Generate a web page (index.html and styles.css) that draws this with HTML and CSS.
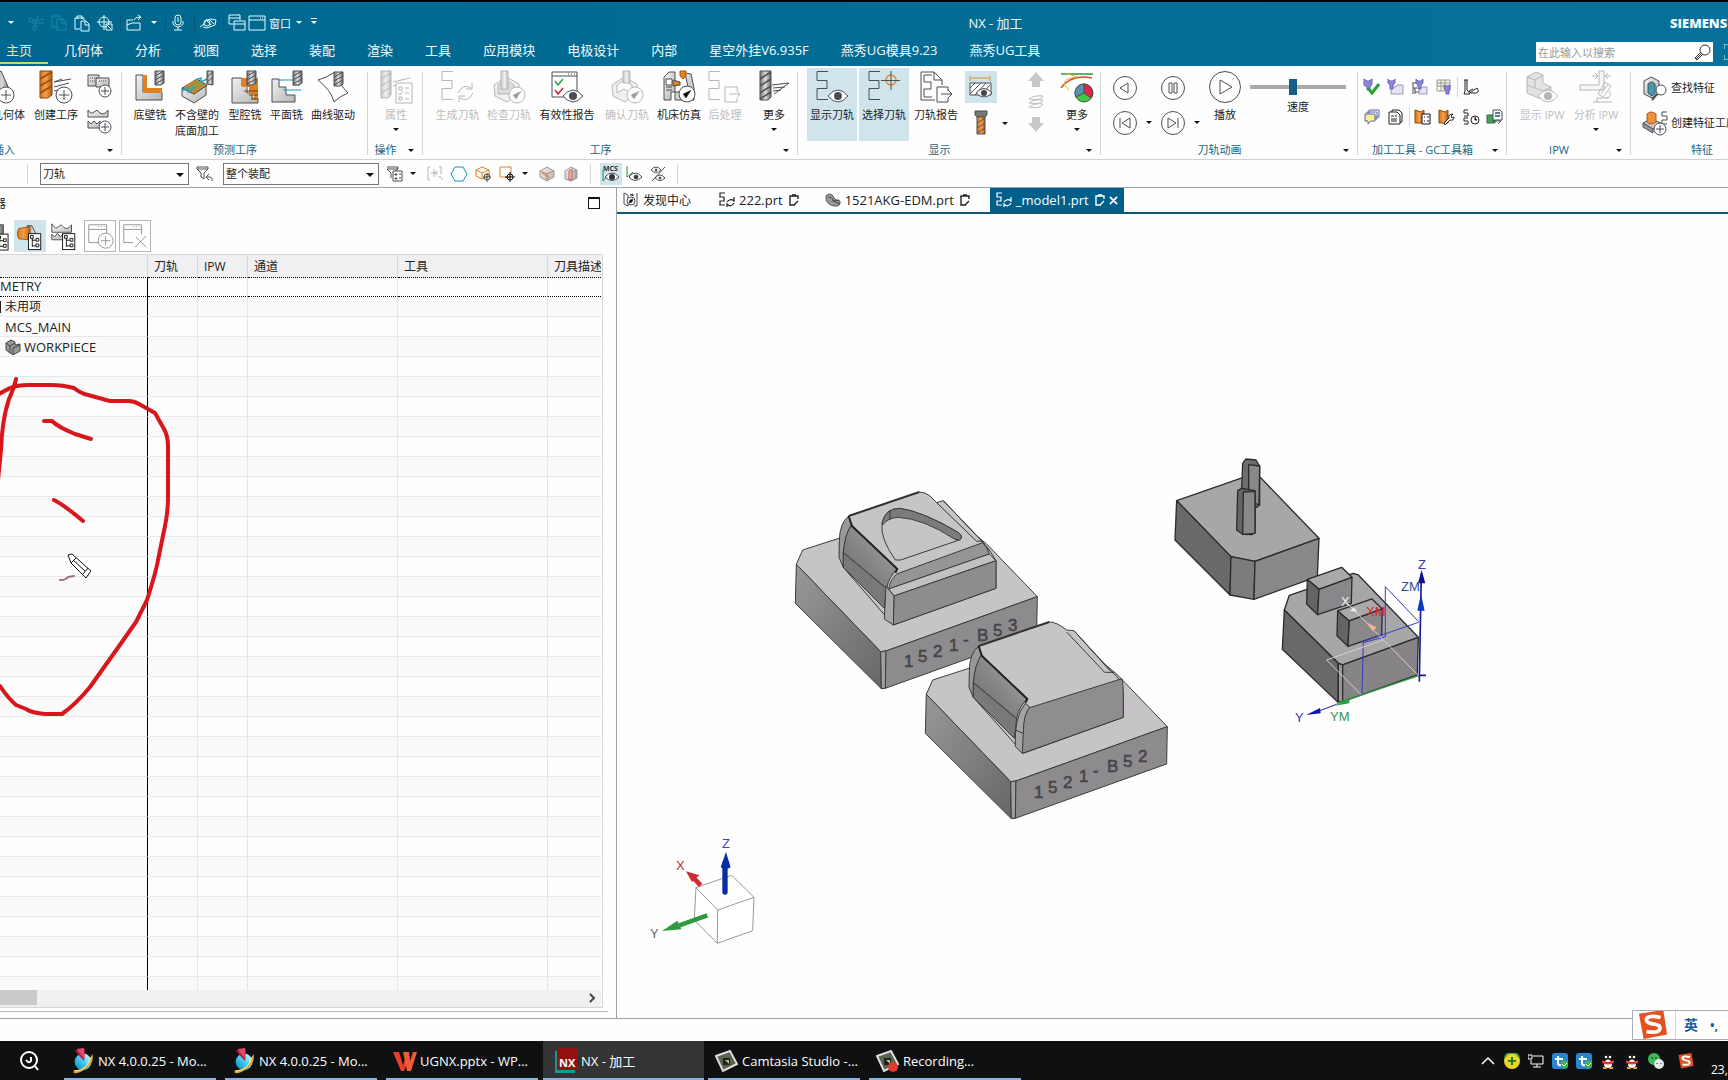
FILE: index.html
```html
<!DOCTYPE html>
<html lang="zh-CN">
<head>
  <meta charset="UTF-8" />
  <meta name="viewport" content="width=device-width, initial-scale=1.0"/>
  <title>NX - 加工</title>
  <link rel="stylesheet" href="styles.css">
</head>
<body>

  <!-- shared icon parts -->
  <svg class="defs" aria-hidden="true">
    <defs>
      <linearGradient id="steel" x1="0" x2="1"><stop offset="0" stop-color="#777"/><stop offset=".5" stop-color="#ddd"/><stop offset="1" stop-color="#666"/></linearGradient>
      <linearGradient id="metal" x1="0" x2="1" y2="1"><stop offset="0" stop-color="#f2f2f2"/><stop offset="1" stop-color="#b5b5b5"/></linearGradient>
      <linearGradient id="copper" x1="0" x2="1"><stop offset="0" stop-color="#d9731a"/><stop offset=".5" stop-color="#f6a04a"/><stop offset="1" stop-color="#b65a12"/></linearGradient>
      <linearGradient id="side" x1="0" x2="1" y2="1"><stop offset="0" stop-color="#9b989c"/><stop offset="1" stop-color="#69666a"/></linearGradient>
      <linearGradient id="bend" x1="0" x2="1" y1="1" y2="0"><stop offset="0" stop-color="#6b686c"/><stop offset=".55" stop-color="#8d8a8e"/><stop offset="1" stop-color="#b4b2b5"/></linearGradient>
      <linearGradient id="globe" x1="0" x2="1" y1="1"><stop offset="0" stop-color="#0b78c9"/><stop offset=".5" stop-color="#3fd0f0"/><stop offset="1" stop-color="#eafcff"/></linearGradient>
      <g id="eye"><path d="M-10 0Q0-12 10 0Q0 12-10 0z" fill="#fff"/><circle r="4" fill="#4a4f55" stroke="none"/></g>
      <g id="plus"><circle r="8" fill="#fff"/><path d="M-5 0H5M0-5V5"/></g>
      <g id="tick"><circle r="8" fill="#fff"/><path d="M-4 0l3 4 5-8"/></g>
      <g id="snake"><path d="M11 0H0v9h10v8H0v11h11" fill="none"/></g>
      <g id="mill"><path d="M0 0h9v12l-3 2H0z" fill="url(#steel)"/><path d="M0 5l9-5M0 9l9-5M0 13l9-5"/></g>
      <g id="tree"><rect width="13" height="17" fill="#fff" stroke="#111"/><path d="M4 3v11M4 7h4M4 13h4" stroke="#111"/><path d="M8 5h3v3H8zM8 11h3v3H8zM2 2h3v3H2z" fill="#fff" stroke="#111"/></g>
      <symbol id="clip" viewBox="0 0 10 12"><path d="M9 5V2H1v9h5M3 1h4M5 11l4-4" fill="none" stroke="currentColor" stroke-width="1.4"/></symbol>
      <symbol id="path-tab" viewBox="0 0 16 16"><g fill="none" stroke="currentColor" stroke-width="1.2"><path d="M6 1H1v4h4v4H1v4h5"/><path d="M8 10q3-4 7-1V5M15 11q-3 5-7 1v3"/></g></symbol>
      <symbol id="nxlogo" viewBox="0 0 24 28"><circle cx="12" cy="15" r="9" fill="url(#globe)"/><path d="M3 3l10 11 1-13z" fill="#b3173a"/><path d="M5 1l8-1 1 13z" fill="#df4a67"/><path d="M2 24Q18 24 22 6Q25 16 14 23Q7 28 2 27z" fill="#e0a52a"/><path d="M3 25Q17 24 21 9" fill="none" stroke="#fff0a0"/></symbol>
      <symbol id="cam" viewBox="0 0 24 22"><path d="M1 6L15 1l7 13L8 21z" fill="#5b6350" stroke="#ddd" stroke-width="2"/><path d="M8 8h7v7H8z" fill="#20251c"/><path d="M10 10h4v4z" fill="#a8cc6c"/></symbol>
      <symbol id="tbox" viewBox="0 0 16 16"><rect width="16" height="16" rx="3" fill="#2a86d2"/><path d="M6 3v7q0 3 4 2M3 6h8" fill="none" stroke="#fff" stroke-width="2"/><path d="M9 8h7v5l-3 3-4-3z" fill="#43b549"/><path d="M10 11l2 2 3-3" fill="none" stroke="#fff"/></symbol>
      <symbol id="qq" viewBox="0 0 16 16"><ellipse cx="8" cy="8" rx="5" ry="7" fill="#111"/><ellipse cx="8" cy="11" rx="4" ry="4" fill="#fff"/><path d="M2 7q6 4 12 0v3q-6 3-12 0z" fill="#e0343c"/><circle cx="6" cy="4" r="1.3" fill="#fff"/><circle cx="10" cy="4" r="1.3" fill="#fff"/><path d="M6 6h4l-2 1zM3 14h4v2H3zM9 14h4v2H9z" fill="#f3a21c"/></symbol>
      <symbol id="sogou" viewBox="0 0 32 32"><path d="M1 4L27 0l4 26L6 31z" fill="#e8501f"/><path d="M24 8Q10 5 9 10q0 4 8 5 8 1 6 6-2 4-14 2" fill="none" stroke="#fff" stroke-width="4"/></symbol>
    </defs>
  </svg>

  <header class="app-header">
    <div class="titlebar">
      <div class="quick">
        <span class="caret light first"></span>
        <button class="qbtn dim" aria-label="剪切"><svg viewBox="0 0 16 16"><circle cx="3" cy="5" r="2"/><circle cx="7" cy="13" r="2"/><path d="M5 6l11-2M7 11l3-10M4 8h12"/></svg></button>
        <button class="qbtn dim" aria-label="复制"><svg viewBox="0 0 16 16"><path d="M6 12H1V1h8v3M6 4h6l3 3v8H6zM11 4v4h4"/></svg></button>
        <button class="qbtn" aria-label="粘贴"><svg viewBox="0 0 16 16"><path d="M6 14H1V3h9v2M3 4V1h5v3M7 6h5l3 3v7H7zM11 6v4h4"/></svg></button>
        <button class="qbtn" aria-label="定位"><svg viewBox="0 0 16 16"><circle cx="7" cy="7" r="5"/><path d="M7 0v15M0 7h15M9 9h6v6H9zM11 11l3 3"/></svg></button>
        <span class="qsep"></span>
        <button class="qbtn" aria-label="打开"><svg viewBox="0 0 16 16"><path d="M7 5H1v10h13V8H6L1 10M8 5q1-3 6-3M12 0l3 2-3 3"/></svg></button>
        <span class="caret light mid"></span>
        <span class="qsep"></span>
        <button class="qbtn" aria-label="语音"><svg viewBox="0 0 16 16"><rect x="4" y="0" width="6" height="10" rx="3"/><path d="M2 6v3q5 6 10 0V6M7 12v3M3 15h8M7 2v5"/></svg></button>
        <span class="qsep"></span>
        <button class="qbtn" aria-label="触摸"><svg viewBox="0 0 16 16"><path d="M0 12l4-3 2-4 5-1 5 1-1 5-3 1-5 2-4-1M6 5l5 5M9 4l5 5"/><circle cx="7" cy="8" r="3"/></svg></button>
        <span class="qsep"></span>
        <button class="qbtn" aria-label="切换窗口"><svg viewBox="0 0 16 16"><path d="M4 9H0V0h11v5M0 3h11M5 6h11v9H5zM5 9h11"/></svg></button>
        <button class="qbtn label"><svg viewBox="0 0 16 16"><path d="M0 1h16v14H0zM0 5h16M11 3h1M13 3h1"/></svg>窗口</button>
        <span class="caret light mid"></span>
        <span class="caret light bar"></span>
      </div>
      <h1 class="title">NX - 加工</h1>
      <span class="brand">SIEMENS</span>
    </div>
    <div class="menubar">
      <nav class="menu">
        <a href="#" class="on">主页</a>
        <a href="#">几何体</a>
        <a href="#">分析</a>
        <a href="#">视图</a>
        <a href="#">选择</a>
        <a href="#">装配</a>
        <a href="#">渲染</a>
        <a href="#">工具</a>
        <a href="#">应用模块</a>
        <a href="#">电极设计</a>
        <a href="#">内部</a>
        <a href="#">星空外挂V6.935F</a>
        <a href="#">燕秀UG模具9.23</a>
        <a href="#">燕秀UG工具</a>
      </nav>
      <div class="search">
        <input type="text" placeholder="在此输入以搜索" aria-label="搜索">
        <svg viewBox="0 0 16 16"><circle cx="10" cy="6" r="5" fill="none" stroke="#333"/><path d="M7 9l-6 6M6 8l-6 6 2 2 6-6" fill="none" stroke="#333"/></svg>
      </div>
      <svg class="full" viewBox="0 0 16 16"><path d="M0 5V0h5M11 0h5v5M16 11v5h-5M5 16H0v-5" fill="none" stroke="#dff"/></svg>
    </div>
  </header>

  <section class="ribbon">
    <div class="group g-insert">
      <div class="tools">
        <button class="big w55"><svg viewBox="0 0 32 32" class="ic"><path d="M12 4l7-4 9 20-8 4z" fill="url(#steel)"/><use href="#plus" x="24" y="24"/></svg><span>创建几何体</span></button>
        <button class="big w56"><svg viewBox="0 0 32 32" class="ic"><path d="M0 0h12v24l-4 3H0z" fill="url(#copper)" stroke="#7a4a1a"/><path d="M0 8l12-7M0 15l12-7M0 22l12-7" stroke="#9a5210" stroke-width="2"/><path d="M14 11l17-3M14 16l15-4M14 20l10-3M14 11l8-3" fill="none"/><use href="#plus" x="24" y="24"/></svg><span>创建工序</span></button>
        <div class="stack">
          <button class="small24" aria-label="创建刀具"><svg viewBox="0 0 24 24" class="ic"><path d="M1 4h11v11H1z" fill="url(#metal)"/><path d="M9 7h13v9H9z" fill="url(#metal)"/><path d="M3 7h7M3 10h5M12 10h7" stroke-dasharray="1 1"/><circle cx="18" cy="20" r="6" fill="#fff"/><path d="M14 20h8M18 16v8"/></svg></button>
          <button class="small24" aria-label="创建方法"><svg viewBox="0 0 24 24" class="ic"><path d="M1 1q3 5 6 2l3-2 3 3q4 3 8-3v7H1zM1 12l3 3 3-3 3 3 3-3v7H1z" fill="url(#metal)"/><circle cx="18" cy="18" r="6" fill="#fff"/><path d="M14 18h8M18 14v8"/></svg></button>
        </div>
      </div>
      <div class="cap"><span>插入</span><i class="caret"></i></div>
    </div>

    <div class="group g-predict">
      <div class="tools">
        <button class="big w44"><svg viewBox="0 0 32 32" class="ic"><path d="M2 4h7v17h19v8H2z" fill="url(#metal)"/><path d="M9 4h4v13h15v5H9z" fill="#e0821e" stroke="none"/><use href="#mill" x="21" y="0"/></svg><span>底壁铣</span></button>
        <button class="big w50"><svg viewBox="0 0 32 32" class="ic"><path d="M1 17l12 6 12-8v9l-12 8-12-7z" fill="url(#metal)"/><path d="M1 17l15-9 10 6-13 9z" fill="#8a9a4a"/><path d="M4 16l14-8M8 19l14-8M11 22l13-8" stroke="#d78520" stroke-width="2"/><path d="M1 20l6-3v4l8-6M14 9l6-2v4l6-3" fill="none" stroke="#22a8cc" stroke-width="1.5"/><path d="M26 0h6v14l-6-1z" fill="url(#steel)"/><path d="M26 6l6-5M26 11l6-5"/></svg><span>不含壁的<br>底面加工</span></button>
        <button class="big w46"><svg viewBox="0 0 32 32" class="ic"><path d="M3 7h10v8h5v7h5v5h6v5H3z" fill="url(#metal)"/><path d="M13 7h16v22h-4v-6h-5v-7h-7z" fill="#dd8123" stroke="none"/><path d="M15 20h14M20 24h9M22 28h7" stroke="#70410f"/><use href="#mill" x="18" y="0"/></svg><span>型腔铣</span></button>
        <button class="big w37"><svg viewBox="0 0 32 32" class="ic"><path d="M1 8h7v8h7v8h9v7H1z" fill="url(#metal)"/><path d="M8 9h17M12 19h18M22 14h7" stroke="#1696b4"/><use href="#mill" x="22" y="0"/></svg><span>平面铣</span></button>
        <button class="big w56"><svg viewBox="0 0 32 32" class="ic"><path d="M1 9q8-2 17-8 4 12 13 21-8 3-14 9Q14 19 1 9z" fill="#fff"/><use href="#mill" x="17" y="1"/></svg><span>曲线驱动</span></button>
      </div>
      <div class="cap"><span>预测工序</span></div>
    </div>

    <div class="group g-op">
      <div class="tools">
        <button class="big w56" disabled><svg viewBox="0 0 32 32" class="ic"><path d="M1 0h10v24l-3 3H1z" fill="url(#steel)"/><path d="M1 8l10-6M1 15l10-6M1 22l10-6M13 11l17-4M13 15l10-3"/><path d="M16 12h16v20H16z" fill="#fff"/><path d="M19 16h3v3h-3zM19 26h3v3h-3zM25 17h4M25 22h4M25 28h4M18 22l2 2 3-4" fill="none"/></svg><span>属性</span><i class="caret"></i></button>
      </div>
      <div class="cap"><span>操作</span><i class="caret"></i></div>
    </div>

    <div class="group g-path">
      <div class="tools">
        <button class="big w53" disabled><svg viewBox="0 0 32 32" class="ic"><use href="#snake" x="0" y="0.5"/><path d="M16 22q5-10 13-5M30 12v6h-6M31 22q-5 10-13 5M17 31v-6h6" fill="none"/></svg><span>生成刀轨</span></button>
        <button class="big w50" disabled><svg viewBox="0 0 32 32" class="ic"><path d="M1 14l12-8 13 7v9l-12 9-12-6z" fill="#ddd"/><path d="M5 14l8-5 8 5v9H5z" fill="#aaa"/><path d="M8 0h7v18H8z" fill="url(#steel)"/><use href="#tick" x="24" y="24"/></svg><span>检查刀轨</span></button>
        <button class="big w66"><svg viewBox="0 0 32 32" class="ic"><path d="M1 1h25v25H1z" fill="#fff"/><path d="M1 5h25M17 3h1M20 3h1M23 3h1"/><path d="M4 10l3 4 5-6" fill="none" stroke="#23a646" stroke-width="1.5"/><path d="M4 19l3 4 5-6" fill="none" stroke="#d3222a" stroke-width="1.5"/><use href="#eye" x="22" y="25"/></svg><span>有效性报告</span></button>
        <button class="big w54" disabled><svg viewBox="0 0 32 32" class="ic"><path d="M1 14l12-8 13 7v9l-12 9-12-6z" fill="#ddd"/><path d="M6 14l7-5 8 5v9l-8-5-7 4z" fill="#fff"/><path d="M12 0h7v12h-7z" fill="url(#steel)"/><use href="#tick" x="24" y="24"/></svg><span>确认刀轨</span></button>
        <button class="big w50"><svg viewBox="0 0 32 32" class="ic"><path d="M1 6l5-5h6v20H8v8H1z" fill="url(#metal)"/><path d="M22 2l6 1 3 14v12H12v-8h14z" fill="url(#metal)"/><path d="M3 8h6v6H3zM3 16h6M3 19h6" fill="#fff"/><path d="M10 9l7 2v3l-7 1z" fill="#e0821e"/><path d="M17 0h6v5l-3 3-3-3z" fill="#e0821e" stroke="#a55a10"/><use href="#tick" x="24" y="23"/></svg><span>机床仿真</span></button>
        <button class="big w42" disabled><svg viewBox="0 0 32 32" class="ic"><use href="#snake" x="0" y="0.5"/><path d="M28 20v-4H16v15h12v-4M20 23h11M28 20l3 3-3 3" fill="none"/></svg><span>后处理</span></button>
        <button class="big w44 gap6"><svg viewBox="0 0 32 32" class="ic"><path d="M2 0h11v26l-3 3H2z" fill="url(#steel)"/><path d="M2 8l11-7M2 15l11-7M2 22l11-7M2 28l11-7" stroke-width="1.5"/><path d="M14 14l17-2-15 11M15 17l12-1M15 20l8-1" fill="none"/></svg><span>更多</span><i class="caret"></i></button>
      </div>
      <div class="cap"><span>工序</span><i class="caret"></i></div>
    </div>

    <div class="group g-show">
      <div class="tools">
        <button class="big w50 active"><svg viewBox="0 0 32 32" class="ic"><use href="#snake" x="1" y="0.5"/><use href="#eye" x="22" y="25"/></svg><span>显示刀轨</span></button>
        <button class="big w50 active"><svg viewBox="0 0 32 32" class="ic"><use href="#snake" x="1" y="0.5"/><circle cx="23" cy="9" r="5" fill="none" stroke="#e08a36" stroke-width="1.5"/><path d="M13 9.5h19M23 0v19"/></svg><span>选择刀轨</span></button>
        <button class="big w50"><svg viewBox="0 0 32 32" class="ic"><path d="M15 29H1V1h13l8 8v5M14 1v8h8" fill="none"/><path d="M12 4H4v7h7v7H4v8h8M28 20v-4H17v15h11v-4M21 23h11M28 19l4 4-4 4" fill="none"/></svg><span>刀轨报告</span></button>
        <div class="stack two">
          <button class="pad active" aria-label="显示毛坯"><svg viewBox="0 0 24 24" class="ic"><path d="M1 8h21v12H1z" fill="#fff"/><path d="M1 13l5-5M1 19L12 8M6 20L17 8M12 20l9-10"/><path d="M1 3h20M1 1v5M21 1v5" stroke="#e08a36"/><path d="M7 18q8-9 16 0-8 8-16 0z" fill="#fff"/><circle cx="15" cy="18" r="3" fill="#444" stroke="none"/></svg></button>
          <button class="pad" aria-label="显示刀具"><svg viewBox="0 0 24 24" class="ic"><path d="M2 0h12v4l-2 2H4L2 4z" fill="#777"/><path d="M4 6h8v17H4z" fill="url(#copper)"/><path d="M4 12l8-5M4 17l8-5M4 22l8-5"/></svg></button>
          <i class="caret"></i>
        </div>
        <div class="levels">
          <svg viewBox="0 0 18 62"><g fill="#c9c9c9"><path d="M9 1l8 9h-4v6H5v-6H1zM9 61l8-9h-4v-6H5v6H1z"/></g><g fill="#fff" stroke="#bbb"><path d="M2 36q5-4 14-3-2 5-14 3zM2 32q5-4 14-3-2 5-14 3zM2 28q5-4 14-3-2 5-14 3z"/></g></svg>
        </div>
        <button class="big w44"><svg viewBox="0 0 32 32" class="ic"><path d="M0 3h32" stroke="#2a9a3c" stroke-width="1.5"/><path d="M0 17Q10 3 31 7" fill="none" stroke="#d4502c" stroke-width="1.5"/><path d="M4 2l12 4Q-4 8 8 19" fill="none" stroke="#e8b42a"/><circle cx="23" cy="22" r="9" fill="#3dcb43"/><path d="M23 22V13a9 9 0 0 1 7 14z" fill="#e62345"/><path d="M23 22V13a9 9 0 0 0-8 13z" fill="#5794ac"/></svg><span>更多</span><i class="caret"></i></button>
      </div>
      <div class="cap"><span>显示</span><i class="caret"></i></div>
    </div>

    <div class="group g-anim">
      <div class="tools">
        <div class="playgrid">
          <button aria-label="反向播放"><svg viewBox="0 0 24 24" class="ic"><circle cx="12" cy="12" r="11.5" fill="#fff"/><path d="M15 7v10l-8-5z" fill="none"/></svg></button><span></span>
          <button aria-label="暂停"><svg viewBox="0 0 24 24" class="ic"><circle cx="12" cy="12" r="11.5" fill="#fff"/><path d="M8 7h3v10H8zM13 7h3v10h-3z" fill="none"/></svg></button><span></span>
          <button aria-label="上一步"><svg viewBox="0 0 24 24" class="ic"><circle cx="12" cy="12" r="11.5" fill="#fff"/><path d="M17 7v10l-8-5zM7 7v10" fill="none"/></svg></button><i class="caret"></i>
          <button aria-label="下一步"><svg viewBox="0 0 24 24" class="ic"><circle cx="12" cy="12" r="11.5" fill="#fff"/><path d="M7 7v10l8-5zM17 7v10" fill="none"/></svg></button><i class="caret"></i>
        </div>
        <button class="big w32"><svg viewBox="0 0 32 32" class="ic"><circle cx="16" cy="16" r="15.5" fill="#fff"/><path d="M11 9v14l12-7z" fill="none"/></svg><span>播放</span></button>
        <div class="speed">
          <input type="range" id="speed" min="0" max="100" value="44">
          <label for="speed">速度</label>
        </div>
      </div>
      <div class="cap"><span>刀轨动画</span><i class="caret"></i></div>
    </div>

    <div class="group g-gc">
      <div class="tools gcrows">
        <div class="gcrow">
          <button aria-label="检查"><svg viewBox="0 0 16 16" class="ic"><path d="M0 0l3 2h2l3-2v5L6 8v3H3V8L0 6z" fill="#8a86d8" stroke="#6a66b8"/><path d="M4 9l4 5 7-9" fill="none" stroke="#2aa33a" stroke-width="3"/></svg></button>
          <button aria-label="文件夹"><svg viewBox="0 0 16 16" class="ic"><path d="M3 8h5l1-2h6v9H3z" fill="#e6e4f4" stroke="#9a98b8"/><path d="M0 0l2 2h3l2-2v4L5 6v4H2V6L0 4z" fill="#8a86d8" stroke="#6a66b8"/></svg></button>
          <button aria-label="结构"><svg viewBox="0 0 16 16" class="ic"><path d="M7 8h8v7H7z" fill="#e6e4f4" stroke="#9a98b8"/><path d="M4 0l2 2h3l2-2v4L9 6v4H6V6L4 4z" fill="#8a86d8" stroke="#6a66b8"/><path d="M0 4h4M1 4v11M1 9h4M3 9v6M3 13h4"/></svg></button>
          <button aria-label="表格"><svg viewBox="0 0 16 16" class="ic"><path d="M1 1h13v11H1zM1 4h13M1 7h13M5 1v11M9 1v11" fill="#fbf7d8" stroke="#999"/><path d="M8 6l2 1h2l2-1v4l-1 1v4h-3v-4l-2-1z" fill="#8a86d8" stroke="#6a66b8"/></svg></button>
          <i class="vs"></i>
          <button aria-label="刀柄"><svg viewBox="0 0 16 16" class="ic"><path d="M1 1h4M2 1v11l-1 3h6l-2-3-1-1V1M8 13l6-4q3 4-1 5H8l-2-2 4-2" fill="none" stroke="#222"/></svg></button>
        </div>
        <div class="gcrow">
          <button aria-label="批注"><svg viewBox="0 0 16 16" class="ic"><path d="M5 1h10v7H5zM3 3h10v7H3z" fill="#fff" stroke="#5a66a8"/><path d="M1 5h10v7H7l-3 3v-3H1z" fill="#f5ef8c" stroke="#5a66a8"/></svg></button>
          <button aria-label="报告"><svg viewBox="0 0 16 16" class="ic"><path d="M4 3V1h7l3 3v9h-2M1 3h8l3 3v9H1z" fill="#fff" stroke="#222"/><path d="M3 7h3M3 10h6M3 12h6M8 6v2" stroke="#222"/></svg></button>
          <i class="vs"></i>
          <button aria-label="工序列表"><svg viewBox="0 0 16 16" class="ic"><path d="M0 1l6 2 3-2v13H0z" fill="url(#copper)" stroke="#8a4a10"/><path d="M7 5h8v10H7z" fill="#fff" stroke="#111"/><path d="M9 8h1M9 12h1M12 8h2M12 12h2" stroke="#111"/></svg></button>
          <button aria-label="工序工具"><svg viewBox="0 0 16 16" class="ic"><path d="M0 1l6 2 3-2v13H0z" fill="url(#copper)" stroke="#8a4a10"/><path d="M5 14l5-5q-1-4 4-4l-2 2 1 2 2-1q0 4-4 3l-5 5z" fill="#fff" stroke="#222"/></svg></button>
          <button aria-label="时间"><svg viewBox="0 0 16 16" class="ic"><path d="M5 1H1v3h4v3H1M5 9H1v3h4v3H1" fill="none" stroke="#222"/><circle cx="12" cy="11" r="4" fill="#fff" stroke="#222"/><path d="M12 8v3h2" stroke="#222"/></svg></button>
          <button aria-label="输出"><svg viewBox="0 0 16 16" class="ic"><path d="M0 6h8v8H0z" fill="#49a05a" stroke="#2a6a3a"/><path d="M6 1h7l2 2v8H6z" fill="#fff"/><path d="M8 4h5M8 7h5" stroke="#234a8a" stroke-width="1.5"/><path d="M5 12h9l-3 3" fill="none"/></svg></button>
        </div>
      </div>
      <div class="cap"><span>加工工具 - GC工具箱</span><i class="caret"></i></div>
    </div>

    <div class="group g-ipw">
      <div class="tools">
        <button class="big w54" disabled><svg viewBox="0 0 32 32" class="ic"><path d="M1 6l9-5 7 3v8l8 4v6l-10 6-14-6z" fill="#bbb"/><path d="M1 6l8 3 8-5M9 9v8l8 3 8-4M9 17L1 14" fill="none"/><use href="#eye" x="22" y="25"/></svg><span>显示 IPW</span></button>
        <button class="big w54" disabled><svg viewBox="0 0 32 32" class="ic"><path d="M19 0h5v19H0v-5h19z" fill="#eee"/><path d="M12 5h6M15 2l3 3-3 3M31 5h-6M28 2l-3 3 3 3M13 31h19M17 27h12M17 31v-4M28 13l-7 10M25 11l6 4-8 11-5-3zM29 20q4 6-3 7" fill="none"/></svg><span>分析 IPW</span><i class="caret"></i></button>
      </div>
      <div class="cap"><span>IPW</span><i class="caret"></i></div>
    </div>

    <div class="group g-feat">
      <div class="tools feat">
        <button class="row"><svg viewBox="0 0 24 24" class="ic"><path d="M1 5l7-4 8 4v13l-7 4-8-4z" fill="url(#metal)"/><path d="M5 8q4-4 7 0v9l-3 3-4-3z" fill="#3e9db4"/><circle cx="18" cy="14" r="5" fill="#fff"/><path d="M14 18l-5 6" stroke-width="2"/></svg>查找特征</button>
        <button class="row"><svg viewBox="0 0 24 24" class="ic"><path d="M0 12l8-4 10 4-8 6z" fill="#ccc"/><path d="M0 12v4l10 6v-4z" fill="#999"/><path d="M4 3q4-4 9 0v8q-5 4-9 0z" fill="#f0913a" stroke="#a4551a"/><path d="M24 1h-5v4h5v4h-5v4h5" fill="none"/><circle cx="17" cy="18" r="6" fill="#fff"/><path d="M13 18h8M17 14v8"/></svg>创建特征工序</button>
      </div>
      <div class="cap"><span>特征</span><i class="caret"></i></div>
    </div>
  </section>

  <section class="selbar">
    <i class="vs tall lead"></i>
    <div class="pick p1"><select aria-label="类型过滤器"><option>刀轨</option></select></div>
    <button class="sb" aria-label="重置过滤器"><svg viewBox="0 0 16 16" class="ic"><path d="M0 1h11v2L7 7v6l-3-2V7L0 3zM0 3h11" fill="none"/><path d="M15 15q1-5-5-4M12 8l-3 3 3 3" fill="none"/></svg></button>
    <div class="pick p2"><select aria-label="选择范围"><option>整个装配</option></select></div>
    <button class="sb" aria-label="过滤器"><svg viewBox="0 0 16 16" class="ic"><path d="M0 1h11v2L7 6v3M0 3l4 4v5M0 3h11" fill="none"/><path d="M6 5h9v10H6z" fill="#fff"/><path d="M8 8h2v1H8zM8 12h2v1H8zM12 8h2M12 12h2" fill="none"/></svg></button>
    <i class="caret"></i>
    <button class="sb off" disabled aria-label="捕捉"><svg viewBox="0 0 16 16" class="ic"><path d="M3 1H1v13h2M12 1h2v7M7 3v8M4 7h7M10 5l-3 2 3 2M15 14q0-4-4-3" fill="none"/></svg></button>
    <button class="sb" aria-label="六边形"><svg viewBox="0 0 16 16" class="ic"><path d="M4 1h8l4 7-4 7H4L0 8z" fill="#fff" stroke="#0f95b4"/></svg></button>
    <button class="sb" aria-label="实体"><svg viewBox="0 0 16 16" class="ic"><path d="M1 4l6-3 7 3v6l-7 3-6-3zM1 4l6 3 7-3M7 7v6" fill="#fff5e6" stroke="#d8842a"/><circle cx="12" cy="11" r="3" fill="none"/><path d="M8 11h8M12 7v9"/></svg></button>
    <button class="sb" aria-label="框选"><svg viewBox="0 0 16 16" class="ic"><path d="M1 1h11v10H1z" fill="#fff" stroke="#d8842a"/><circle cx="11" cy="11" r="3" fill="none" stroke="#111"/><path d="M6 11h10M11 6v10" stroke="#111"/></svg></button>
    <i class="caret"></i>
    <button class="sb" aria-label="剖面"><svg viewBox="0 0 16 16" class="ic"><path d="M1 5l7-4 7 4v6l-7 4-7-4z" fill="url(#metal)" stroke="#999"/><path d="M1 5l7 3 7-3M8 8v7M3 7l8 5" stroke="#cc7a50" fill="none"/></svg></button>
    <button class="sb" aria-label="透明"><svg viewBox="0 0 16 16" class="ic"><path d="M2 5l6-4 6 3v8l-6 3-6-2z" fill="url(#metal)" stroke="#999"/><path d="M8 7l5-3v8l-5 3z" fill="#bbb" stroke="#999"/><path d="M6 5l3-2v10l-3 1z" fill="#f0b49c" stroke="#c66"/></svg></button>
    <i class="vs tall"></i>
    <button class="sb mcs active" aria-label="MCS"><svg viewBox="0 0 22 20" class="ic"><text x="3" y="7">MCS</text><path d="M3 6v11l6-7" fill="none" stroke="#2b8a4c"/><path d="M5 13q7-8 14 0-7 7-14 0z" fill="#fff"/><circle cx="12" cy="13" r="3" fill="#333" stroke="none"/></svg></button>
    <button class="sb" aria-label="显示坐标"><svg viewBox="0 0 16 16" class="ic"><path d="M1 0v11l6-5" fill="none" stroke="#2b8a4c"/><path d="M3 11q6-8 13 0-7 7-13 0z" fill="#fff"/><circle cx="10" cy="11" r="2" fill="#333"/></svg></button>
    <button class="sb" aria-label="隐藏"><svg viewBox="0 0 16 16" class="ic"><path d="M1 4q5-6 10 0-5 5-10 0zM5 12q5-6 10 0-5 5-10 0z" fill="#fff"/><circle cx="6" cy="4" r="1" fill="#444"/><circle cx="10" cy="12" r="1" fill="#444"/><path d="M15 1L2 15"/></svg></button>
    <i class="vs tall"></i>
  </section>

  <main class="work">
    <section class="navigator">
      <div class="nav-head"><span>器</span><button class="max" aria-label="最大化"></button></div>
      <div class="nav-tools">
        <button aria-label="机床视图" class="cutoff"><svg viewBox="0 0 32 32" class="ic"><path d="M8 4h18v20H8z" fill="url(#steel)"/><use href="#tree" x="18" y="14"/></svg></button>
        <button aria-label="几何视图" class="active"><svg viewBox="0 0 32 32" class="ic"><path d="M14 5h5l8 16-5 6-8-8z" fill="url(#steel)"/><path d="M5 8l12-2v14L5 19q-3-6 0-11z" fill="url(#copper)" stroke="#a4551a"/><use href="#tree" x="15.5" y="13.5"/></svg></button>
        <button aria-label="加工方法视图"><svg viewBox="0 0 32 32" class="ic"><path d="M3 3q4 7 7 3l3-2 3 3q4 3 8-3v8H3zM3 14l3 3 3-4 3 4 3-3v6H3z" fill="url(#metal)"/><use href="#tree" x="14.5" y="13.5"/></svg></button>
        <button aria-label="新建" class="boxed"><svg viewBox="0 0 32 32" class="ic"><path d="M4 4h19v19H4zM4 9h19M14 6h1M17 6h1M20 6h1" fill="none"/><use href="#plus" x="22" y="21"/></svg></button>
        <button aria-label="删除" class="boxed"><svg viewBox="0 0 32 32" class="ic"><path d="M14 23H4V4h19v10M4 9h19M14 6h1M17 6h1M20 6h1M17 17l11 11M28 16L16 28" fill="none"/></svg></button>
      </div>
      <div class="grid-frame">
        <div class="grid-body">
          <table>
            <thead>
              <tr><th class="c-name"></th><th class="c-s">刀轨</th><th class="c-s">IPW</th><th class="c-l">通道</th><th class="c-l">工具</th><th>刀具描述</th></tr>
            </thead>
            <tbody id="rows">
              <tr class="focus"><td class="n0">METRY</td><td></td><td></td><td></td><td></td><td></td></tr>
              <tr><td class="n1 zh"><i class="stub"></i>未用项</td><td></td><td></td><td></td><td></td><td></td></tr>
              <tr><td class="n1">MCS_MAIN</td><td></td><td></td><td></td><td></td><td></td></tr>
              <tr><td class="n1"><svg viewBox="0 0 16 16" class="part"><path d="M1 4l5-3 4 2v3l5-1v7l-7 4-7-5z" fill="#999" stroke="#444"/><path d="M1 4l4 3 5-3M5 7v7M8 9l7-3M8 9v6" fill="none" stroke="#444"/></svg>WORKPIECE</td><td></td><td></td><td></td><td></td><td></td></tr>
            </tbody>
          </table>
        </div>
        <div class="hscroll"><i class="thumb"></i><svg viewBox="0 0 8 10"><path d="M2 1l4 4-4 4" fill="none" stroke="#444" stroke-width="2"/></svg></div>
      </div>
      <div class="nav-foot"></div>

      <svg class="ink" viewBox="0 188 616 830" preserveAspectRatio="xMinYMin">
        <g fill="none" stroke="#d8161c" stroke-width="4" stroke-linecap="round" stroke-linejoin="round">
          <path d="M-3 395L10 388Q18 385 28 385H52Q62 385 74 388Q80 393 88 395L110 401H128Q134 401 139 404L155 413L164 429Q168 436 168 446V497Q168 512 165 526L158 560Q156 572 147 600L136 622L117 649L90 687Q76 704 62 714H45Q32 713 26 709L16 705Q8 698 0 686"/>
          <path d="M16 379Q14 388 9 399Q2 420 1 450L-2 480"/>
          <path d="M44 421H52Q58 427 75 434L91 439"/>
          <path d="M54 500Q64 505 83 521"/>
          <path d="M60 580q6 0 8-3l6-1" stroke="#a0717b" stroke-width="2"/>
        </g>
        <path d="M68 555l4-1 19 17-5 7-15-15zM71 563l5-5M83 574l5-6M73 560l12 11" fill="#fff" stroke="#111"/>
      </svg>
    </section>

    <section class="stage">
      <nav class="tabs">
        <a href="#" class="tab t1"><svg viewBox="0 0 16 16" class="ic"><path d="M1 1l4 2v11l-4-2zM14 1v13h-3" fill="none"/><circle cx="8" cy="9" r="4" fill="#fff"/><path d="M6 11l1-3 3-1-1 3zM7 3l3-1v2"/></svg>发现中心</a>
        <a href="#" class="tab t2"><svg class="ti"><use href="#path-tab"/></svg>222.prt<svg class="clip"><use href="#clip"/></svg></a>
        <a href="#" class="tab t3"><svg viewBox="0 0 16 16" class="ic"><path d="M1 4q3-4 7 0 1 4 7 5 1 6-6 5-9-2-8-10z" fill="#999" stroke="#555"/><path d="M3 5q5 0 5 4l7 3M8 9l6-1" fill="none" stroke="#444"/></svg>1521AKG-EDM.prt<svg class="clip"><use href="#clip"/></svg></a>
        <a href="#" class="tab t4 on"><svg class="ti"><use href="#path-tab"/></svg>_model1.prt<svg class="clip"><use href="#clip"/></svg><svg viewBox="0 0 10 10" class="cross"><path d="M1 1l8 8M9 1L1 9" stroke="#fff" stroke-width="2"/></svg></a>
      </nav>

      <svg class="scene" viewBox="617 214 1111 804" preserveAspectRatio="xMinYMin">
        <!-- electrode B53 -->
        <g transform="translate(780 470) scale(.3333)" stroke="#3c3a3d" stroke-width="3" stroke-linejoin="round">
          <g id="base">
            <path d="M49 283L68 240L180 204L470 100L620 222L772 380L318 543L302 545z" fill="#c6c4c7"/>
            <path d="M49 283L302 545L304 656L46 400z" fill="url(#side)"/>
            <path d="M302 545L318 543L316 655L304 656z" fill="#a19fa2"/>
            <path d="M318 543L772 380L770 492L316 655z" fill="#8e8b8f"/>
          </g>
          <path d="M206 138L418 66Q436 66 450 78L470 98L490 92L604 212L628 240L648 272V355L340 465L190 292z" fill="#c6c4c7"/>
          <path d="M350 312L608 218Q622 230 628 252L326 357Q330 330 350 312z" fill="#979498"/>
          <path d="M326 357L628 252L648 272L342 378z" fill="#c2c0c3"/>
          <path d="M342 378L648 272V355L340 465z" fill="#8f8c90"/>
          <path d="M470 98L590 214L606 213M490 92L606 213L628 242" fill="none"/>
          <path d="M346 270Q300 205 306 160Q315 115 360 115Q430 125 536 188Q552 202 538 210L362 270z" fill="#c6c4c7"/>
          <path d="M306 160Q315 115 360 115Q430 125 536 188Q552 202 538 210L525 208Q430 146 355 142Q322 144 308 165z" fill="#7d7a7e"/>
          <path d="M330 120V148" fill="none"/>
          <g id="wall">
            <path d="M206 138Q178 160 178 215L177 262L190 292V248Q196 195 214 165z" fill="#9a979b"/>
            <path d="M214 165L352 297Q326 320 320 356L190 248Q194 195 214 165z" fill="url(#bend)"/>
            <path d="M190 248L320 356L313 415L190 292z" fill="#7b787c"/>
            <path d="M206 138L216 168L352 297L346 308" fill="none" stroke-width="6" stroke="#222"/>
            <path d="M206 138L418 66" stroke-width="6" stroke="#333"/>
          </g>
          <path d="M318 348L342 378L340 465L313 447z" fill="#aaa7ab"/>
        </g>
        <g class="engrave">
          <text x="904 918 933 949 963 977 993 1008" y="667 662 657 651 645 641 636 631">1521-B53</text>
        </g>
        <!-- electrode B52, same base shifted -->
        <g transform="translate(910 600) scale(.3333)" stroke="#3c3a3d" stroke-width="3" stroke-linejoin="round">
          <use href="#base"/>
          <path d="M206 138L418 66Q440 66 470 90L492 92L606 216Q640 240 640 290V352L340 460L190 292z" fill="#c6c4c7"/>
          <path d="M356 324L636 236Q640 252 640 290V352L337 460Q330 360 356 324z" fill="#908d91"/>
          <path d="M470 96L584 217H612M492 92L600 212" fill="none"/>
          <use href="#wall"/>
          <path d="M346 310L360 322Q340 340 340 400L337 460L316 440Q312 350 346 310z" fill="#a6a3a7"/>
          <path d="M316 390L340 400" fill="none"/>
        </g>
        <g class="engrave">
          <text x="1034 1048 1063 1079 1093 1107 1123 1138" y="798 793 788 782 776 772 767 762">1521-B52</text>
        </g>

        <!-- pin electrode and two-block electrode -->
        <g transform="translate(1150 440) scale(.3333)" stroke="#2c2b2d" stroke-width="4" stroke-linejoin="round">
          <path d="M80 182L278 113L332 113L507 295L315 364L243 350z" fill="#a7a6a8"/>
          <path d="M80 182L243 350L240 465L75 300z" fill="#6a686b"/>
          <path d="M243 350L315 364L312 478L240 465z" fill="#7d7b7e"/>
          <path d="M315 364L507 295L502 410L312 478z" fill="#89878a"/>
          <path d="M278 70L288 57L318 60L329 78V195L318 203L275 150z" fill="#6e6c6f"/>
          <path d="M296 74L329 78L327 195L296 180z" fill="#8a888b"/>
          <path d="M263 152L275 145L315 152V278L305 284L278 283L260 270z" fill="#666467"/>
          <path d="M280 156L315 154V280L278 283z" fill="#8a888b"/>
          <path d="M403 510L418 466L610 400L625 405L805 592L578 675L565 670z" fill="#a7a6a8"/>
          <path d="M403 510L565 670V788L397 628z" fill="#6a686b"/>
          <path d="M565 670L578 675V785H565z" fill="#99979a"/>
          <path d="M578 675L805 592L802 705L578 785z" fill="#868487"/>
          <g id="lug">
            <path d="M472 418L575 382L606 412L507 448z" fill="#a9a8aa"/>
            <path d="M472 418L507 448L503 524L470 492z" fill="#656366"/>
            <path d="M507 448L606 412L604 490L503 524z" fill="#89878a"/>
          </g>
          <use href="#lug" x="91" y="95"/>
          <g fill="none" stroke-width="3">
            <path d="M806 545L706 440V590L640 608L636 765M640 604L806 547" stroke="#3a38c8"/>
            <path d="M806 707L582 480M636 766L530 660L700 600" stroke="#d8cfcd"/>
            <path d="M806 707L560 790" stroke="#2e9a3e" stroke-width="4"/>
            <path d="M808 725L814 400M806 706H828" stroke="#1a1a9a" stroke-width="5"/>
            <path d="M560 793L510 812" stroke="#1a1a9a"/>
          </g>
          <g stroke="none">
            <path d="M815 390L826 430H804z" fill="#10109a"/>
            <path d="M813 462L824 512H802z" fill="#0b3ac0"/>
            <path d="M468 825L510 804L512 820z" fill="#1212a4"/>
            <path d="M556 797L598 772V790z" fill="#2e9a3e"/>
            <path d="M648 546L680 562L668 574z" fill="#f3b09a"/>
            <path d="M622 516L600 512L612 502z" fill="#eee"/>
          </g>
        </g>
        <g class="axis">
          <text x="1418" y="569" fill="#3936b8">Z</text>
          <text x="1401" y="591" fill="#2c4f9a">ZM</text>
          <text x="1341" y="606" fill="#eee">X</text>
          <text x="1366" y="616" fill="#d8262c">XM</text>
          <text x="1295" y="722" fill="#3936b8">Y</text>
          <text x="1330" y="721" fill="#3c9150">YM</text>
        </g>

        <!-- view triad -->
        <g transform="translate(640 820) scale(.3333)">
          <path d="M168 203L275 166L342 232L338 332L232 370L163 300zM168 203L233 270L342 232M233 270L232 370" fill="#fff" stroke="#999" stroke-width="3"/>
          <path d="M255 216V130" stroke="#062da8" stroke-width="16" stroke-linecap="round"/>
          <path d="M258 96L272 142Q257 152 242 142z" fill="#062da8"/>
          <path d="M202 286L118 316" stroke="#2f9a3c" stroke-width="14"/>
          <path d="M66 333L112 302L124 328z" fill="#2f9a3c"/>
          <path d="M182 196L162 175" stroke="#cf2a35" stroke-width="14"/>
          <path d="M138 154L178 166L156 186z" fill="#cf2a35"/>
        </g>
        <g class="axis">
          <text x="722" y="848" fill="#4442c0">Z</text>
          <text x="676" y="870" fill="#b3333c">X</text>
          <text x="650" y="938" fill="#666">Y</text>
        </g>
      </svg>
    </section>
  </main>

  <div class="status">
    <div class="ime">
      <svg class="so"><use href="#sogou"/></svg>
      <b>英</b>
      <span>•,</span>
    </div>
  </div>

  <footer class="taskbar">
    <button class="find" aria-label="搜索"><svg viewBox="0 0 20 20"><circle cx="9" cy="9" r="8" fill="none" stroke="#fff" stroke-width="2"/><path d="M15 15l3 4" stroke="#fff" stroke-width="2"/><path d="M6 9q3 4 5 1V6" stroke="#fff" fill="none" stroke-width="2"/></svg></button>
    <button class="task"><svg><use href="#nxlogo"/></svg><span>NX 4.0.0.25 - Mo...</span></button>
    <button class="task"><svg><use href="#nxlogo"/></svg><span>NX 4.0.0.25 - Mo...</span></button>
    <button class="task"><svg viewBox="0 0 24 22"><path d="M0 2h6l4 13 3-9h4l-6 15H8z" fill="#e8402c"/><path d="M10 2h6l1 9 3-9h4l-6 19h-4z" fill="#f2593a"/></svg><span>UGNX.pptx - WP...</span></button>
    <button class="task on"><svg viewBox="0 0 24 26"><path d="M1 3v22h20v-4H3V3z" fill="#0e9a9a"/><path d="M3 0h21v22H3z" fill="#94100f"/><text x="5" y="19" class="nx">NX</text></svg><span>NX - 加工</span></button>
    <button class="task"><svg><use href="#cam"/></svg><span>Camtasia Studio -...</span></button>
    <button class="task"><svg viewBox="0 0 24 22"><use href="#cam" width="24" height="22"/><circle cx="17" cy="17" r="5" fill="#e23a2e"/></svg><span>Recording...</span></button>
    <div class="tray">
      <svg viewBox="0 0 16 16"><path d="M2 11l6-6 6 6" fill="none" stroke="#fff" stroke-width="1.5"/></svg>
      <svg viewBox="0 0 16 16"><circle cx="8" cy="8" r="8" fill="#e9d624"/><path d="M1 4a8 8 0 0 1 14 0" stroke="#4aa83a" stroke-width="2" fill="none"/><path d="M8 4v8M4 8h8" stroke="#1f7a2a" stroke-width="2"/></svg>
      <svg viewBox="0 0 16 16"><path d="M5 3h10v8H3V7M0 2h4v4H0zM9 11v3M5 14h8" fill="none" stroke="#fff"/></svg>
      <svg><use href="#tbox"/></svg>
      <svg><use href="#tbox"/></svg>
      <svg><use href="#qq"/></svg>
      <svg><use href="#qq"/></svg>
      <svg viewBox="0 0 16 16"><circle cx="6" cy="6" r="6" fill="#3dbb5c"/><circle cx="11" cy="11" r="5" fill="#e8e8e8"/><path d="M4 4v2M8 4v2M9 10v1M13 10v1" stroke="#222"/></svg>
      <svg class="wide"><use href="#sogou"/></svg>
      <time>23,</time>
    </div>
  </footer>

  <script>
    const rows = document.getElementById("rows");
    const emptyRows = 60;

    for (let i = 0; i < emptyRows; i++) {
      const tr = document.createElement("tr");
      for (let c = 0; c < 6; c++) {
        tr.appendChild(document.createElement("td"));
      }
      rows.appendChild(tr);
    }
  </script>

</body>
</html>
```
FILE: styles.css
```css
* {
  margin: 0;
  padding: 0;
  box-sizing: border-box;
}

body {
  height: 100vh;
  display: flex;
  flex-direction: column;
  overflow: hidden;
  background: #fefefe;
  color: #222;
  font-family: "Open Sans", "Noto Sans CJK SC", sans-serif;
  font-size: 12px;
}

button,
input,
select {
  font: inherit;
  color: inherit;
  border: none;
  background: none;
}

a {
  color: inherit;
  text-decoration: none;
}

svg {
  display: block;
  flex: none;
}

.defs {
  position: absolute;
  width: 0;
  height: 0;
}

.ic {
  stroke: #4a4f55;
  overflow: visible;
}

.caret {
  width: 0;
  height: 0;
  border: 3px solid transparent;
  border-top-color: #111;
  border-bottom: none;
}

.caret.light {
  border-top-color: #fff;
}

.vs {
  width: 1px;
  height: 20px;
  margin: 0 1px;
  background: #d5d5d5;
}

/* header */
.app-header {
  background: linear-gradient(90deg, #00688f, #07719a);
  border-top: 2px solid #000;
  color: #f2fbff;
}

.titlebar {
  height: 40px;
  display: flex;
  align-items: center;
  padding-top: 1px;
}

.quick {
  display: flex;
  align-items: center;
}

.quick .first {
  margin: 0 11px 0 8px;
}

.quick .mid {
  margin: 0 5px;
}

.quick .bar {
  margin: 0 4px;
  position: relative;
}

.quick .bar::before {
  content: "";
  position: absolute;
  left: -3px;
  top: -6px;
  width: 6px;
  height: 1px;
  background: #fff;
}

.qbtn {
  display: flex;
  align-items: center;
  gap: 4px;
  padding: 0 4px 0 3px;
}

.qbtn.label {
  font-size: 11px;
  padding: 0;
}

.qbtn svg {
  width: 16px;
  height: 16px;
  fill: none;
  stroke: #e6fbff;
  overflow: visible;
}

.qbtn.dim svg {
  stroke: #1f86aa;
}

.qsep {
  width: 1px;
  height: 16px;
  margin: 0 2px 0 3px;
  background: #035574;
}

.title {
  margin: 0 auto;
  font-size: 13px;
  font-weight: 400;
}

.brand {
  width: 58px;
  overflow: hidden;
  font-weight: 800;
  font-size: 13px;
}

.menubar {
  height: 24px;
  display: flex;
  align-items: flex-start;
}

.menu {
  flex: 1;
  display: flex;
  margin-left: -10px;
  font-size: 13px;
  line-height: 16px;
}

.menu a {
  height: 22px;
  padding: 0 16px;
  white-space: nowrap;
}

.menu .on {
  color: #f0e6a0;
  border-bottom: 2px solid #d8cf72;
}

.search {
  width: 177px;
  height: 20px;
  display: flex;
  align-items: center;
  background: #fff;
  margin-right: 11px;
}

.search input {
  flex: 1;
  min-width: 0;
  padding-left: 2px;
  font-size: 11px;
  color: #333;
}

.search input::placeholder {
  color: #999;
}

.search svg {
  width: 16px;
  height: 16px;
  margin-right: 2px;
}

.full {
  width: 16px;
  height: 16px;
  margin: 2px -12px 0 0;
}

/* ribbon */
.ribbon {
  display: flex;
  overflow: hidden;
  font-size: 11px;
  line-height: 16px;
  border-bottom: 1px solid #d0d0d0;
}

.group {
  flex: none;
  display: flex;
  flex-direction: column;
  position: relative;
  padding-top: 2px;
}

.group::after {
  content: "";
  position: absolute;
  right: 0;
  top: 6px;
  bottom: 4px;
  width: 1px;
  background: #d5d5d5;
}

.g-insert { width: 216px; margin-left: -94px; }
.g-predict { width: 246px; }
.g-op { width: 55px; }
.g-path { width: 375px; }
.g-show { width: 303px; }
.g-anim { width: 257px; }
.g-gc { width: 149px; }
.g-ipw { width: 124px; }
.g-feat { width: 162px; }

.tools {
  display: flex;
  align-items: flex-start;
  height: 73px;
}

.g-insert .tools { padding-left: 64px; }
.g-predict .tools { padding-left: 6px; }
.g-path .tools { padding-left: 8px; }
.g-show .tools { padding-left: 9px; gap: 2px; }
.g-anim .tools { padding-left: 12px; }
.g-gc .tools { padding-left: 2px; }
.g-ipw .tools { padding-left: 8px; }
.g-feat .tools { padding-left: 12px; }

.cap {
  display: flex;
  align-items: center;
  height: 18px;
  color: #1a6485;
}

.cap span {
  flex: 1;
  text-align: center;
  margin-right: 8px;
  white-space: nowrap;
}

.cap span:last-child {
  margin-right: 20px;
}

.cap .caret {
  margin-right: 9px;
  margin-left: -3px;
}

.big {
  flex: none;
  height: 73px;
  padding-top: 3px;
  display: flex;
  flex-direction: column;
  align-items: center;
  white-space: nowrap;
}

.big svg {
  width: 32px;
  height: 32px;
  margin-bottom: 4px;
}

.big .caret {
  margin-top: 5px;
}

.big:disabled {
  color: #bdbdbd;
}

.big:disabled svg {
  opacity: .4;
}

.active {
  background: #cfe4eb;
}

.w32 { width: 32px; }
.w37 { width: 37px; }
.w42 { width: 42px; }
.w44 { width: 44px; }
.w46 { width: 46px; }
.w50 { width: 50px; }
.w53 { width: 53px; }
.w54 { width: 54px; }
.w55 { width: 55px; margin-right: 3px; }
.w56 { width: 56px; }
.w66 { width: 66px; }
.gap6 { margin-left: 6px; }

.stack {
  display: flex;
  flex-direction: column;
  gap: 14px;
  padding: 3px 0 0 3px;
}

.small24 svg {
  width: 24px;
  height: 24px;
}

.stack.two {
  display: grid;
  grid-template-columns: 32px 16px;
  gap: 4px 0;
  padding-left: 2px;
}

.stack.two .caret {
  align-self: center;
  justify-self: center;
}

.stack.two .active {
  grid-column: 1 / 3;
  width: 32px;
}

.pad {
  height: 32px;
  padding: 4px;
}

.pad svg {
  width: 24px;
  height: 24px;
}

.pad:not(.active) svg {
  margin-left: 4px;
}

.levels {
  width: 38px;
  padding: 3px 0 0 12px;
}

.levels svg {
  width: 18px;
  height: 62px;
}

.playgrid {
  display: grid;
  grid-template-columns: repeat(4, 24px);
  grid-auto-rows: 35px;
  align-items: center;
  justify-items: center;
  padding-top: 2px;
}

.playgrid svg {
  width: 24px;
  height: 24px;
}

.speed {
  display: flex;
  flex-direction: column;
  align-items: center;
  margin-left: 9px;
  padding-top: 11px;
  gap: 4px;
}

.speed input {
  appearance: none;
  width: 96px;
  height: 16px;
}

.speed input::-webkit-slider-runnable-track {
  height: 4px;
  background: #aaa;
}

.speed input::-webkit-slider-thumb {
  appearance: none;
  width: 8px;
  height: 16px;
  margin-top: -6px;
  background: #135f87;
}

.tools.gcrows {
  flex-direction: column;
  padding-top: 4px;
}

.gcrow {
  display: flex;
  align-items: center;
  height: 30px;
}

.gcrow button {
  width: 24px;
  padding: 4px;
}

.gcrow svg {
  width: 16px;
  height: 16px;
}

.tools.feat {
  flex-direction: column;
  padding-top: 2px;
}

.row {
  height: 35px;
  display: flex;
  align-items: center;
  gap: 4px;
  white-space: nowrap;
}

.row svg {
  width: 24px;
  height: 24px;
}

/* selection bar */
.selbar {
  display: flex;
  align-items: center;
  height: 28px;
  border-bottom: 1px solid #a0a4a8;
}

.pick {
  position: relative;
  height: 22px;
  border: 1px solid #767676;
}

.pick select {
  appearance: none;
  width: 100%;
  height: 20px;
  padding-left: 2px;
  font-size: 11px;
}

.pick::after {
  content: "";
  position: absolute;
  right: 4px;
  top: 9px;
  border: 4px solid transparent;
  border-top-color: #111;
  border-bottom: none;
  pointer-events: none;
}

.p1 { width: 149px; margin-right: 4px; }
.p2 { width: 156px; margin: 0 4px 0 6px; }

.sb {
  padding: 3px 4px;
}

.sb svg {
  width: 16px;
  height: 16px;
}

.selbar .caret {
  margin: 0 7px 0 3px;
}

.sb.off {
  opacity: .4;
}

.selbar .vs.tall {
  margin-left: 7px;
  margin-right: 9px;
}

.selbar .vs.lead {
  margin-left: 27px;
  margin-right: 12px;
}

.sb.mcs {
  padding: 1px 0;
}

.sb.mcs svg {
  width: 22px;
  height: 20px;
}

.mcs text {
  font: 700 7px "Open Sans", sans-serif;
  fill: #333;
  stroke: none;
}

/* work area */
.work {
  flex: 1;
  min-height: 0;
  display: flex;
}

.navigator {
  position: relative;
  flex: 0 0 617px;
  display: flex;
  flex-direction: column;
  border-right: 1px solid #98a4ac;
  overflow: hidden;
}

.nav-head {
  height: 30px;
  display: flex;
  align-items: center;
  justify-content: space-between;
  padding-right: 16px;
}

.nav-head span {
  margin-left: -6px;
}

.max {
  width: 12px;
  height: 12px;
  border: 1px solid #111;
  border-top-width: 2px;
}

.nav-tools {
  height: 36px;
  display: flex;
  gap: 3px;
  padding: 2px 0 0 14px;
}

.nav-tools button {
  flex: none;
  width: 32px;
  height: 32px;
}

.nav-tools svg {
  width: 30px;
  height: 30px;
}

.nav-tools .cutoff {
  margin-left: -35px;
}

.nav-tools .boxed {
  border: 1px solid #b5b5b5;
}

.boxed svg {
  opacity: .6;
}

.grid-frame {
  flex: 1;
  min-height: 0;
  display: flex;
  flex-direction: column;
  margin-right: 13px;
  border: 1px solid #d5d5d5;
  border-left: none;
  padding-right: 1px;
}

.grid-body {
  flex: 1;
  min-height: 0;
  overflow: hidden;
}

table {
  width: 100%;
  table-layout: fixed;
  border-collapse: separate;
  border-spacing: 0;
}

th {
  height: 22px;
  padding-left: 6px;
  background: #f0eff1;
  border-right: 1px solid #d9d9d9;
  font-weight: 400;
  text-align: left;
  white-space: nowrap;
  overflow: hidden;
}

.c-name { width: 148px; }
.c-s { width: 50px; }
.c-l { width: 150px; }

td {
  height: 20px;
  line-height: 18px;
  border-right: 1px solid #e6e6e9;
  border-bottom: 1px solid #e9e9ec;
  font-size: 13px;
  white-space: nowrap;
}

td.zh {
  font-size: 12px;
}

td:first-child {
  border-right-color: #000;
}

th:last-child,
td:last-child {
  border-right: none;
}

tbody tr:nth-child(even) {
  background: #fafafa;
}

.focus td {
  border-top: 1px dotted #000;
  border-bottom: 1px dotted #000;
  line-height: 16px;
}

.n0 {
  padding-bottom: 2px;
}

.n1 {
  padding-left: 5px;
}

.stub {
  float: left;
  width: 1px;
  height: 12px;
  margin: 3px 0 0 -5px;
  background: #222;
}

.part {
  float: left;
  width: 16px;
  height: 16px;
  margin: 1px 3px 0 0;
}

.hscroll {
  height: 17px;
  display: flex;
  align-items: flex-start;
  justify-content: space-between;
  padding-right: 5px;
  background: #f0eff1;
}

.thumb {
  width: 37px;
  height: 15px;
  background: #cacaca;
}

.hscroll svg {
  width: 8px;
  height: 10px;
  margin-top: 3px;
}

.nav-foot {
  height: 10px;
  margin-right: 8px;
  border-bottom: 6px solid #fefefe;
  box-shadow: inset 0 -1px #b5b5b5;
}

.ink {
  position: absolute;
  left: 0;
  top: 0;
  width: 616px;
  height: 830px;
  pointer-events: none;
}

.stage {
  flex: 1;
  min-width: 0;
  display: flex;
  flex-direction: column;
}

.tabs {
  display: flex;
  height: 26px;
  border-bottom: 2px solid #135877;
  font-size: 13px;
}

.tab {
  display: flex;
  align-items: center;
  gap: 4px;
  height: 24px;
  padding: 0 6px;
  margin-right: 14px;
}

.tab .ic,
.ti {
  width: 16px;
  height: 16px;
}

.clip {
  width: 10px;
  height: 12px;
  margin-left: 2px;
}

.cross {
  width: 9px;
  height: 9px;
}

.tab.t1 {
  margin-right: 16px;
  font-size: 12px;
}

.tab.on {
  background: #005f8b;
  color: #fff;
}

.scene {
  flex: 1;
  min-height: 0;
  width: 100%;
}

.engrave {
  font: 17px "Liberation Sans", sans-serif;
  fill: #4f4c50;
  stroke: #3a383b;
  stroke-width: .5;
}

.axis {
  font: 13px "Liberation Sans", sans-serif;
}

/* status strip and input method bar */
.status {
  position: relative;
  height: 23px;
  border-top: 1px solid #a0a0a0;
}

.ime {
  position: absolute;
  right: 0;
  bottom: 1px;
  width: 96px;
  height: 30px;
  display: flex;
  align-items: center;
  overflow: hidden;
  background: #fff;
  border: 1px solid #aab;
  border-right: none;
  color: #1262ab;
}

.so {
  width: 32px;
  height: 30px;
  margin: 0 6px 0 4px;
}

.ime b {
  font-size: 14px;
  line-height: 28px;
  padding: 0 12px 0 8px;
  border-left: 1px solid #ecc;
}

.ime span {
  font-weight: 700;
}

/* taskbar */
.taskbar {
  display: flex;
  height: 39px;
  background: #0f1011;
  color: #fff;
  font-size: 13px;
}

.find {
  width: 60px;
  padding-left: 20px;
}

.find svg {
  width: 20px;
  height: 20px;
}

.task {
  position: relative;
  width: 161px;
  display: flex;
  align-items: center;
  gap: 3px;
  padding-left: 11px;
  white-space: nowrap;
}

.task::after {
  content: "";
  position: absolute;
  left: 4px;
  right: 5px;
  bottom: 0;
  height: 2px;
  background: #8fb0dd;
}

.task svg {
  width: 24px;
  height: 26px;
}

.task.on {
  background: #333435;
}

.task.on::after {
  left: 0;
  right: 0;
}

.nx {
  font: 700 11px "Open Sans", sans-serif;
  fill: #fff;
}

.tray {
  flex: 1;
  display: flex;
  align-items: center;
  justify-content: flex-end;
  gap: 8px;
}

.tray svg {
  width: 16px;
  height: 16px;
}

.tray .wide {
  margin-left: 6px;
}

.tray time {
  align-self: flex-end;
  width: 17px;
  margin-left: 9px;
  padding-bottom: 2px;
  font-size: 12px;
  overflow: hidden;
}
```
